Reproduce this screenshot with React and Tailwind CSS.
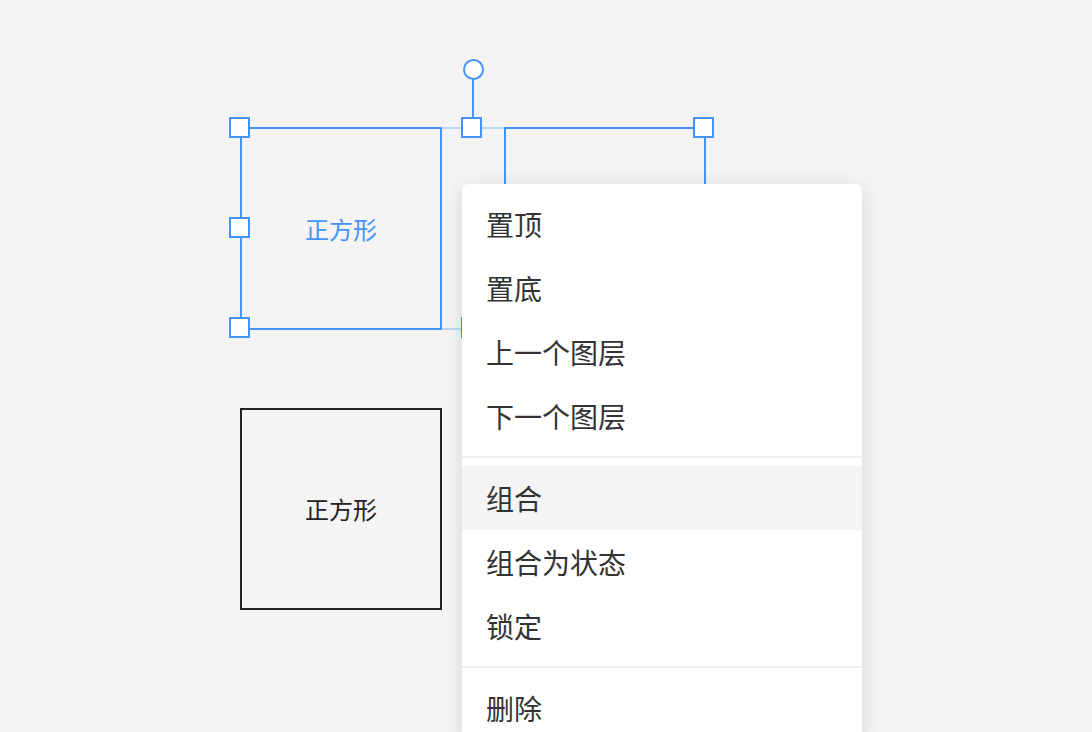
import React from 'react';

const font = { fontFamily: '"Noto Sans CJK SC", "Noto Sans", sans-serif' };

const Handle = ({ className }) => (
  <div className={`absolute w-[21px] h-[21px] bg-white border-2 border-[#4394f6] ${className}`} />
);

const MenuItem = ({ label, active }) => (
  <div className={`h-16 px-6 flex items-center text-[28px] text-[#333333] ${active ? 'bg-[#f4f4f4]' : ''}`}>
    {label}
  </div>
);

const Divider = () => <div className="my-2 h-[2px] bg-[#eeeeee]" />;

const App = () => {
  return (
    <div className="relative w-[1092px] h-[732px] overflow-hidden bg-[#f4f4f4]" style={font}>
      {/* selection outline between shapes */}
      <div className="absolute left-[442px] top-[127px] w-[62px] h-[2px] bg-[#bfd6f4]" />
      <div className="absolute left-[442px] top-[328px] w-[62px] h-[2px] bg-[#bfd6f4]" />

      {/* selected square */}
      <div className="absolute left-[240px] top-[127px] w-[202px] h-[203px] border-2 border-[#4394f6] flex items-center justify-center">
        <span className="text-2xl text-[#4394f6]">正方形</span>
      </div>

      {/* second selected shape */}
      <div className="absolute left-[504px] top-[127px] w-[202px] h-[203px] border-2 border-[#4394f6]" />

      {/* rotate handle */}
      <div className="absolute left-[472px] top-[79px] w-[2px] h-[40px] bg-[#4394f6]" />
      <div className="absolute left-[463px] top-[59px] w-[21px] h-[21px] rounded-full bg-white border-2 border-[#4394f6]" />

      <Handle className="left-[229px] top-[117px]" />
      <Handle className="left-[461px] top-[117px]" />
      <Handle className="left-[693px] top-[117px]" />
      <Handle className="left-[229px] top-[217px]" />
      <Handle className="left-[229px] top-[317px]" />
      <Handle className="left-[461px] top-[317px]" />

      {/* plain square */}
      <div className="absolute left-[240px] top-[408px] w-[202px] h-[202px] border-2 border-[#222222] flex items-center justify-center">
        <span className="text-2xl text-[#222222]">正方形</span>
      </div>

      {/* context menu */}
      <div className="absolute left-[462px] top-[184px] w-[400px] py-2 bg-white rounded-md shadow-[0_4px_20px_rgba(0,0,0,0.12)]">
        <MenuItem label="置顶" />
        <MenuItem label="置底" />
        <MenuItem label="上一个图层" />
        <MenuItem label="下一个图层" />
        <Divider />
        <MenuItem label="组合" active />
        <MenuItem label="组合为状态" />
        <MenuItem label="锁定" />
        <Divider />
        <MenuItem label="删除" />
      </div>
    </div>
  );
};

export default App;
